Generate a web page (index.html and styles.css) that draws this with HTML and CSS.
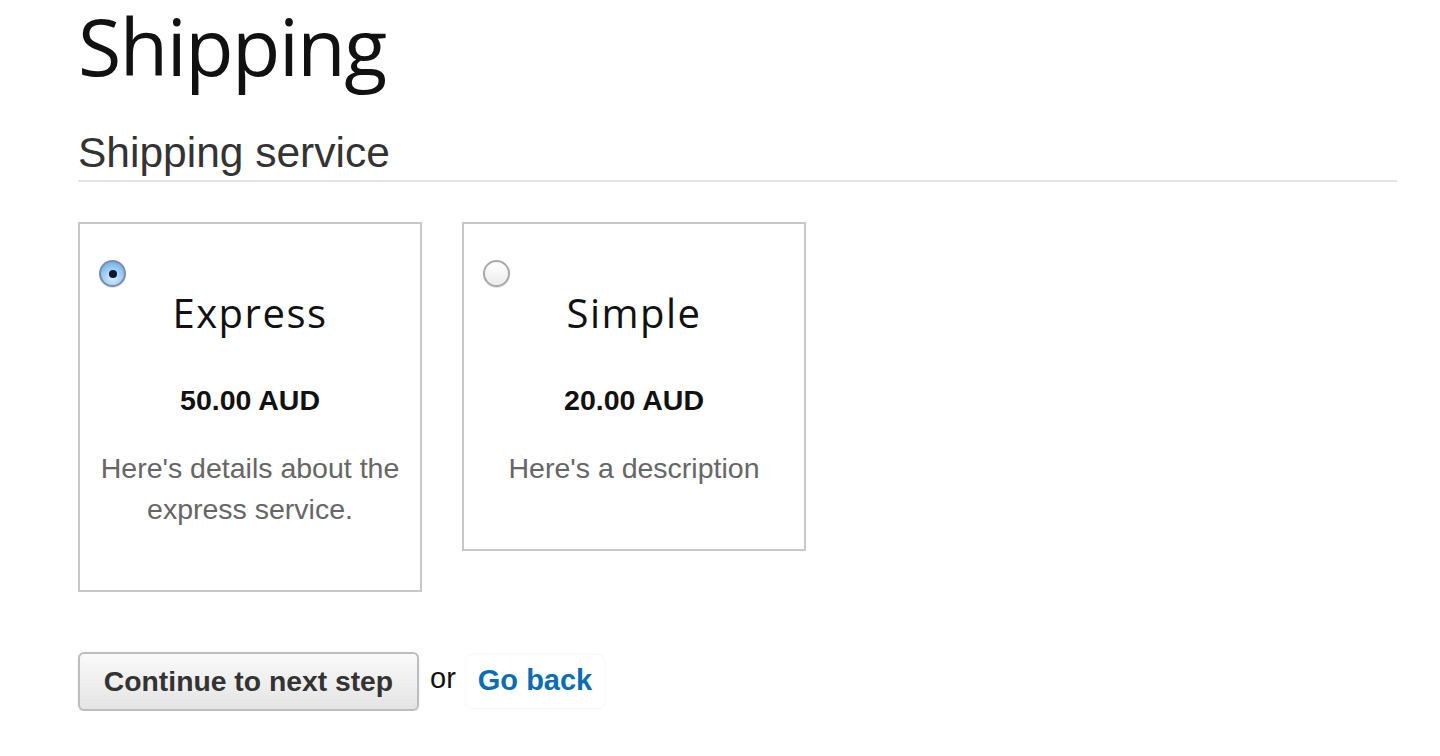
FILE: index.html
```html
<!DOCTYPE html>
<html>
<head>
<meta charset="utf-8">
<link rel="stylesheet" href="styles.css">
</head>
<body>
<div class="page">
  <h1 class="title">Shipping</h1>
  <h2 class="section">Shipping service</h2>
  <div class="options">
    <label class="card">
      <span class="radio radio-on"><span class="dot"></span></span>
      <span class="name">Express</span>
      <span class="price">50.00 AUD</span>
      <span class="desc">Here's details about the express service.</span>
    </label>
    <label class="card">
      <span class="radio"></span>
      <span class="name">Simple</span>
      <span class="price">20.00 AUD</span>
      <span class="desc">Here's a description</span>
    </label>
  </div>
  <div class="actions">
    <button class="btn">Continue to next step</button>
    <span class="or">or</span>
    <a class="back" href="#">Go back</a>
  </div>
</div>
</body>
</html>
```
FILE: styles.css
```css
html, body {
  margin: 0;
  padding: 0;
  background: #fff;
}
.page {
  padding: 0 43px 0 78px;
  font-family: "Liberation Sans", Arial, sans-serif;
}
.title {
  margin: 0;
  font-family: "Open Sans", sans-serif;
  font-weight: 400;
  font-size: 79px;
  line-height: 92px;
  color: #111;
  letter-spacing: -1.5px;
}
.section {
  margin: 37px 0 0;
  font-weight: 400;
  font-size: 42.5px;
  line-height: 48px;
  color: #333;
  padding-bottom: 3px;
  border-bottom: 2px solid #e4e4e4;
}
.options {
  display: flex;
  align-items: flex-start;
  gap: 40px;
  margin-top: 40px;
}
.card {
  box-sizing: border-box;
  width: 344px;
  border: 2px solid #c8c8c8;
  padding: 36px 14px 60px;
  display: flex;
  flex-direction: column;
  align-items: stretch;
  text-align: center;
}
.radio {
  box-sizing: border-box;
  margin-left: 5px;
  width: 27px;
  height: 27px;
  border-radius: 50%;
  border: 2px solid #a8a8a8;
  background: linear-gradient(#ffffff, #ececec);
  box-shadow: 0 1px 1px rgba(0,0,0,0.12);
  display: flex;
  align-items: center;
  justify-content: center;
}
.radio-on {
  border-color: #7a8ea8;
  background: radial-gradient(circle at 50% 70%, #d6ecff 0%, #96c7f4 55%, #5f9fe0 100%);
}
.dot {
  width: 8px;
  height: 8px;
  border-radius: 50%;
  background: #0b1830;
}
.name {
  margin-top: 1.5px;
  font-family: "Open Sans", sans-serif;
  font-size: 40px;
  line-height: 48px;
  letter-spacing: 1.5px;
  color: #111;
}
.price {
  margin-top: 46.5px;
  font-weight: 700;
  font-size: 28.5px;
  line-height: 34px;
  color: #111;
}
.desc {
  margin-top: 30.5px;
  font-size: 28.5px;
  line-height: 41px;
  color: #666;
}
.actions {
  display: flex;
  align-items: center;
  margin-top: 60px;
}
.btn {
  box-sizing: border-box;
  width: 341px;
  height: 59px;
  border: 2px solid #bdbdbd;
  border-radius: 6px;
  background: linear-gradient(#fafafa, #e4e4e4);
  box-shadow: 0 1px 2px rgba(0,0,0,0.12);
  font-family: "Liberation Sans", Arial, sans-serif;
  font-weight: 700;
  font-size: 28.3px;
  color: #333;
  padding: 0;
}
.or {
  margin-left: 11px;
  font-size: 29px;
  color: #111;
  position: relative;
  top: -3px;
}
.back {
  margin-left: 10px;
  display: inline-block;
  padding: 10px 12px 12px;
  border-radius: 6px;
  background: #fff;
  box-shadow: 0 0 3px rgba(0,0,0,0.08);
  font-weight: 700;
  font-size: 29px;
  line-height: 31px;
  color: #0a6db3;
  text-decoration: none;
}
```
